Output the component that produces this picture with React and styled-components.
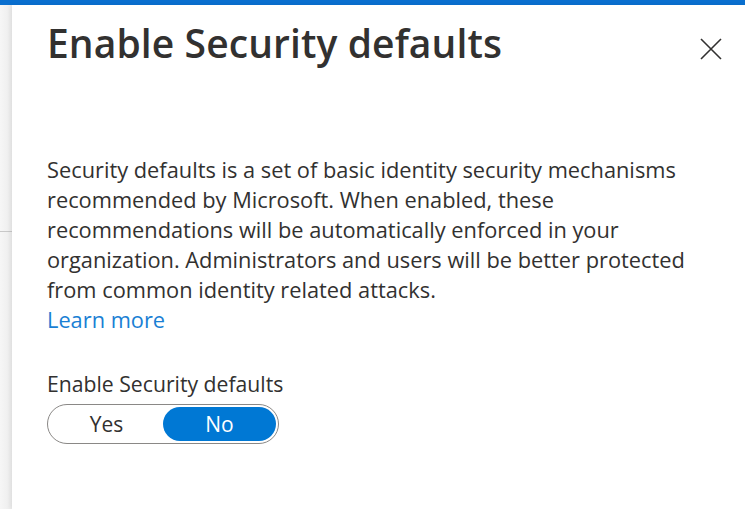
import React, { useState } from 'react';
import styled, { createGlobalStyle } from 'styled-components';

const GlobalStyle = createGlobalStyle`
  html, body {
    margin: 0;
    padding: 0;
    background: #ffffff;
  }
  body {
    font-family: "Open Sans", "Noto Sans", sans-serif;
    color: #323130;
  }
`;

const Page = styled.div`
  width: 745px;
  height: 509px;
  overflow: hidden;
  display: flex;
  flex-direction: column;
`;

const TopBar = styled.div`
  height: 5px;
  flex: none;
  background: #0a6fcf;
`;

const Body = styled.div`
  flex: 1;
  display: flex;
`;

const Backdrop = styled.div`
  width: 12px;
  flex: none;
  background: linear-gradient(to right, #f6f6f6, #ececec);
  display: flex;
  flex-direction: column;
  padding-top: 226px;
`;

const BackdropLine = styled.div`
  height: 1px;
  background: #c8c8c8;
`;

const Panel = styled.div`
  flex: 1;
  background: #ffffff;
  box-shadow: -2px 0 4px rgba(0, 0, 0, 0.06);
  padding: 0 0 0 35px;
  display: flex;
  flex-direction: column;
`;

const Header = styled.div`
  display: flex;
  align-items: flex-start;
  justify-content: space-between;
  padding-top: 12px;
`;

const Title = styled.h1`
  margin: 0;
  font-size: 39px;
  font-weight: 600;
  line-height: 52px;
  letter-spacing: 0.1px;
  color: #323130;
`;

const CloseButton = styled.button`
  border: none;
  background: none;
  padding: 0;
  margin: 20px 22px 0 0;
  width: 24px;
  height: 24px;
  display: flex;
  align-items: center;
  justify-content: center;
  cursor: pointer;
`;

const Description = styled.p`
  margin: 86px 0 0;
  font-size: 21.8px;
  line-height: 30px;
  color: #323130;
  max-width: 660px;
`;

const Link = styled.a`
  color: #1a7fd4;
  text-decoration: none;
  display: block;
`;

const Label = styled.div`
  margin-top: 34px;
  font-size: 21.2px;
  line-height: 30px;
  color: #323130;
`;

const Toggle = styled.div`
  margin-top: 5px;
  width: 232px;
  height: 40px;
  box-sizing: border-box;
  border: 1px solid #8a8886;
  border-radius: 20px;
  display: flex;
  padding: 2px;
`;

const Option = styled.button`
  flex: 1;
  border: none;
  border-radius: 18px;
  font-family: inherit;
  font-size: 21px;
  padding: 0;
  cursor: pointer;
  background: ${(p) => (p.$active ? '#0078d4' : 'transparent')};
  color: ${(p) => (p.$active ? '#ffffff' : '#323130')};
`;

const App = () => {
  const [enabled, setEnabled] = useState(false);

  return (
    <Page>
      <GlobalStyle />
      <TopBar />
      <Body>
        <Backdrop>
          <BackdropLine />
        </Backdrop>
        <Panel>
          <Header>
            <Title>Enable Security defaults</Title>
            <CloseButton aria-label="Close">
              <svg width="22" height="22" viewBox="0 0 22 22">
                <path d="M1 1 L21 21 M21 1 L1 21" stroke="#323130" strokeWidth="1.6" fill="none" />
              </svg>
            </CloseButton>
          </Header>
          <Description>
            Security defaults is a set of basic identity security mechanisms recommended by
            Microsoft. When enabled, these recommendations will be automatically enforced in your
            organization. Administrators and users will be better protected from common identity
            related attacks.
            <Link href="#">Learn more</Link>
          </Description>
          <Label>Enable Security defaults</Label>
          <Toggle>
            <Option $active={enabled} onClick={() => setEnabled(true)}>Yes</Option>
            <Option $active={!enabled} onClick={() => setEnabled(false)}>No</Option>
          </Toggle>
        </Panel>
      </Body>
    </Page>
  );
};

export default App;
